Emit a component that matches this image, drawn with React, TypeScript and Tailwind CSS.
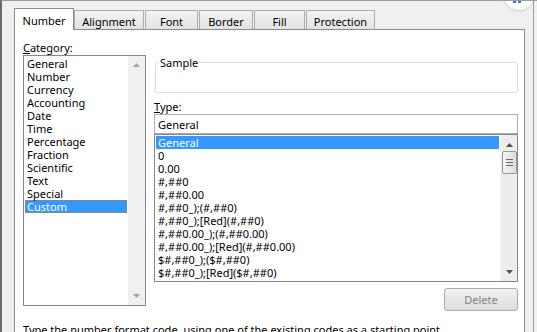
import React from 'react'

const categories = ['General', 'Number', 'Currency', 'Accounting', 'Date', 'Time', 'Percentage', 'Fraction', 'Scientific', 'Text', 'Special', 'Custom']

const formats = [
    'General',
    '0',
    '0.00',
    '#,##0',
    '#,##0.00',
    '#,##0_);(#,##0)',
    '#,##0_);[Red](#,##0)',
    '#,##0.00_);(#,##0.00)',
    '#,##0.00_);[Red](#,##0.00)',
    '$#,##0_);($#,##0)',
    '$#,##0_);[Red]($#,##0)',
]

function Arrow({ up, color }: { up?: boolean; color: string }) {
    return (
        <svg width="7" height="4" viewBox="0 0 7 4">
            <path d={up ? 'M3.5 0L7 4H0z' : 'M0 0h7L3.5 4z'} fill={color} />
        </svg>
    )
}

function Tab({ label, active, w }: { label: string; active?: boolean; w: string }) {
    if (active) {
        return (
            <div className={`${w} h-[22px] -mb-[1px] border border-b-0 border-[#898c95] bg-white pt-[5px] text-center relative z-10`}>
                {label}
            </div>
        )
    }
    return (
        <div className={`${w} h-[19px] border border-b-0 border-[#acacac] bg-gradient-to-b from-[#f3f3f3] to-[#e3e3e3] pt-[4px] text-center`}>
            {label}
        </div>
    )
}

export default function App() {
    return (
        <div className="relative h-[332px] w-[537px] overflow-hidden border-l-2 border-t border-l-[#6a6a6a] border-t-[#9c9c9c] bg-[#f0f0f0] font-['Noto_Sans',sans-serif] text-[11px] leading-[13px] text-black">
            <div className="h-full w-[532px] border-r border-[#a0a0a0] pl-[12px] pt-[7px]">
                {/* tabs */}
                <div className="flex h-[21px] items-end">
                    <Tab label="Number" active w="w-[60px]" />
                    <Tab label="Alignment" w="w-[70px]" />
                    <div className="ml-[1px]"><Tab label="Font" w="w-[53px]" /></div>
                    <div className="ml-[1px]"><Tab label="Border" w="w-[54px]" /></div>
                    <div className="ml-[1px]"><Tab label="Fill" w="w-[51px]" /></div>
                    <div className="ml-[1px]"><Tab label="Protection" w="w-[69px]" /></div>
                </div>

                {/* panel */}
                <div className="h-[400px] w-[511px] border border-[#898c95] bg-white pl-[8px] pr-[6px] pt-[11px]">
                    <div className="flex items-start gap-[8px]">
                        {/* category */}
                        <div className="flex w-[123px] flex-col">
                            <div className="h-[13px]"><span className="underline">C</span>ategory:</div>
                            <div className="mt-[1px] flex h-[251px] border border-[#828790]">
                                <div className="flex-1 pt-[1px]">
                                    {categories.map((c) => (
                                        <div
                                            key={c}
                                            className={
                                                c === 'Custom'
                                                    ? 'mx-[1px] h-[13px] whitespace-nowrap border border-dotted border-[#c9752b] bg-[#3399ff] pl-[1px] leading-[11px] text-white'
                                                    : 'mx-[1px] h-[13px] whitespace-nowrap pl-[2px]'
                                            }
                                        >
                                            {c}
                                        </div>
                                    ))}
                                </div>
                                <div className="flex w-[17px] flex-col items-center justify-between bg-[#f0f0f0] pt-[7px] pb-[7px]">
                                    <Arrow up color="#a3a3a3" />
                                    <Arrow color="#a3a3a3" />
                                </div>
                            </div>
                        </div>

                        {/* type */}
                        <div className="flex w-[364px] flex-col">
                            <div className="relative ml-[1px] mt-[21px] h-[31px] rounded-[3px] border border-[#d5dfe5]">
                                <span className="absolute -top-[7px] left-[3px] bg-white px-[1px]">Sample</span>
                            </div>
                            <div className="mt-[7px] h-[13px]"><span className="underline">T</span>ype:</div>
                            <div className="mt-[1px] flex h-[20px] items-center border border-[#abadb3] pl-[3px]">General</div>
                            <div className="flex h-[148px] border border-[#828790]">
                                <div className="flex-1 pt-[1px]">
                                    {formats.map((f, i) => (
                                        <div
                                            key={f}
                                            className={
                                                i === 0
                                                    ? 'mx-[1px] h-[13px] whitespace-nowrap bg-[#3399ff] pl-[2px] text-white'
                                                    : 'mx-[1px] h-[13px] whitespace-nowrap pl-[2px]'
                                            }
                                        >
                                            {f}
                                        </div>
                                    ))}
                                </div>
                                <div className="flex w-[17px] flex-col items-center border-l border-[#f7f7f7] bg-[#ededed] pt-[8px] pb-[7px]">
                                    <Arrow up color="#4d4d4d" />
                                    <div className="mt-[4px] flex h-[23px] w-[15px] flex-col items-center justify-center gap-[2px] rounded-[2px] border border-[#979797] bg-gradient-to-r from-[#f4f4f4] to-[#dedede]">
                                        <div className="h-[1px] w-[7px] bg-[#666]" />
                                        <div className="h-[1px] w-[7px] bg-[#666]" />
                                        <div className="h-[1px] w-[7px] bg-[#666]" />
                                    </div>
                                    <div className="flex-1" />
                                    <Arrow color="#4d4d4d" />
                                </div>
                            </div>
                            <button className="mt-[6px] h-[23px] w-[74px] self-end rounded-[3px] border border-[#acacac] bg-gradient-to-b from-[#f2f2f2] to-[#dcdcdc] text-[#838383]">
                                Delete
                            </button>
                        </div>
                    </div>
                    <div className="mt-[12px] whitespace-nowrap">
                        Type the number format code, using one of the existing codes as a starting point.
                    </div>
                </div>
            </div>

            {/* help button peeking in from above */}
            <div className="absolute left-[502px] -top-[21px] h-[30px] w-[30px] rounded-full bg-white shadow-[0_1px_3px_rgba(0,0,0,0.15)]">
                <div className="absolute left-[9px] top-[20px] h-[3px] w-[3px] bg-[#2d7ad6]" />
                <div className="absolute left-[14px] top-[20px] h-[3px] w-[3px] bg-[#2d7ad6]" />
            </div>
        </div>
    )
}
